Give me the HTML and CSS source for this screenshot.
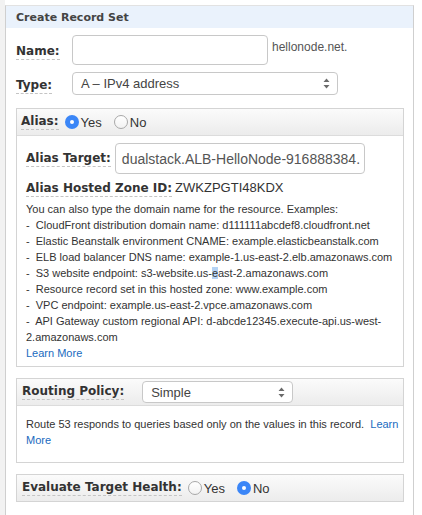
FILE: index.html
```html
<!DOCTYPE html>
<html>
<head>
<meta charset="utf-8">
<link rel="stylesheet" href="styles.css">
</head>
<body>
<div class="page">
  <div class="panel">
    <div class="panel-head">Create Record Set</div>
    <div class="panel-body">
      <div class="row name-row">
        <span class="label-col"><span class="label">Name:</span></span>
        <div class="input name-input"></div>
        <span class="suffix">hellonode.net.</span>
      </div>
      <div class="row type-row">
        <span class="label-col"><span class="label">Type:</span></span>
        <div class="select type-select">
          <span class="select-text">A – IPv4 address</span>
          <svg class="arrows" width="7" height="11" viewBox="0 0 7 11"><path d="M3.5 0.5 L6.5 4 L0.5 4 Z M3.5 10.5 L6.5 7 L0.5 7 Z" fill="#6b6b6b"/></svg>
        </div>
      </div>

      <div class="box alias-box">
        <div class="box-head">
          <span class="label">Alias:</span>
          <span class="radio on"></span><span class="radio-text">Yes</span>
          <span class="radio"></span><span class="radio-text">No</span>
        </div>
        <div class="box-body alias-body">
          <div class="target-row">
            <span class="label">Alias Target:</span>
            <div class="input target-input"><span>dualstack.ALB-HelloNode-916888384.</span></div>
          </div>
          <div class="zone-row"><span class="label">Alias Hosted Zone ID:</span> <span class="zone-val">ZWKZPGTI48KDX</span></div>
          <div class="help">
            <div>You can also type the domain name for the resource. Examples:</div>
            <div>-&nbsp; CloudFront distribution domain name: d111111abcdef8.cloudfront.net</div>
            <div>-&nbsp; Elastic Beanstalk environment CNAME: example.elasticbeanstalk.com</div>
            <div>-&nbsp; ELB load balancer DNS name: example-1.us-east-2.elb.amazonaws.com</div>
            <div>-&nbsp; S3 website endpoint: s3-website.us-<span class="sel">e</span>ast-2.amazonaws.com</div>
            <div>-&nbsp; Resource record set in this hosted zone: www.example.com</div>
            <div>-&nbsp; VPC endpoint: example.us-east-2.vpce.amazonaws.com</div>
            <div>-&nbsp; API Gateway custom regional API: d-abcde12345.execute-api.us-west-2.amazonaws.com</div>
            <div><a class="link">Learn More</a></div>
          </div>
        </div>
      </div>

      <div class="box routing-box">
        <div class="box-head">
          <span class="label">Routing Policy:</span>
          <div class="select routing-select">
            <span class="select-text">Simple</span>
            <svg class="arrows" width="7" height="11" viewBox="0 0 7 11"><path d="M3.5 0.5 L6.5 4 L0.5 4 Z M3.5 10.5 L6.5 7 L0.5 7 Z" fill="#6b6b6b"/></svg>
          </div>
        </div>
        <div class="box-body routing-body">
          <div>Route 53 responds to queries based only on the values in this record.&nbsp; <a class="link">Learn</a></div>
          <div><a class="link">More</a></div>
        </div>
      </div>

      <div class="box eval-box">
        <div class="box-head">
          <span class="label">Evaluate Target Health:</span>
          <span class="radio"></span><span class="radio-text">Yes</span>
          <span class="radio on"></span><span class="radio-text">No</span>
        </div>
      </div>
    </div>
  </div>
</div>
</body>
</html>
```

FILE: styles.css
```css
html, body {
  margin: 0;
  padding: 0;
  background: #fff;
}
.page {
  width: 422px;
  height: 515px;
  overflow: hidden;
  background: linear-gradient(to right, #f2f2f2 5px, #fff 5px);
  padding-top: 5px;
  box-sizing: border-box;
}
.panel {
  margin-left: 5px;
  width: 409px;
  box-sizing: border-box;
  border-left: 1px solid #cfcfcf;
  border-right: 1px solid #cfcfcf;
  border-top: 1px solid #e2e2e2;
  height: 520px;
  background: #fff;
}
.panel-head {
  height: 22px;
  line-height: 23px;
  background: #eaf2fc;
  padding-left: 10px;
  font-family: "DejaVu Sans", Verdana, sans-serif;
  font-weight: bold;
  font-size: 11px;
  color: #444;
}
.panel-body {
  padding: 7px 9px 0 10px;
}
.row {
  display: flex;
  align-items: center;
}
.label-col {
  width: 56px;
  flex: none;
}
.label {
  font-family: "DejaVu Sans", Verdana, sans-serif;
  font-weight: bold;
  font-size: 12px;
  color: #333;
  border-bottom: 1px dashed #c4c4c4;
  padding-bottom: 1px;
  white-space: nowrap;
}
.input {
  box-sizing: border-box;
  border: 1px solid #c8c8c8;
  border-radius: 4px;
  background: #fff;
}
.name-input {
  width: 196px;
  height: 30px;
}
.suffix {
  margin-left: 4px;
  margin-top: -7px;
  font-family: "Liberation Sans", Arial, sans-serif;
  font-size: 12px;
  color: #555;
}
.type-row {
  margin-top: 7px;
}
.select {
  box-sizing: border-box;
  border: 1px solid #c8c8c8;
  border-radius: 4px;
  background: #fff;
  display: flex;
  align-items: center;
  justify-content: space-between;
  font-family: "Liberation Sans", Arial, sans-serif;
  color: #444;
}
.type-select {
  width: 266px;
  height: 23px;
  padding: 0 7px 0 8px;
  font-size: 13px;
}
.arrows {
  display: block;
}
.box {
  box-sizing: border-box;
  width: 388px;
  border: 1px solid #d4d4d4;
}
.box-head {
  box-sizing: border-box;
  height: 27px;
  display: flex;
  align-items: center;
  padding-left: 4px;
  background: linear-gradient(#fbfbfb, #ececec);
  border-bottom: 1px solid #dcdcdc;
}
.alias-box {
  margin-top: 13px;
}
.radio {
  box-sizing: border-box;
  width: 14px;
  height: 14px;
  border-radius: 50%;
  border: 1px solid #a8a8a8;
  background: linear-gradient(#fff, #f2f2f2);
  flex: none;
  position: relative;
}
.radio.on {
  border: none;
  background: #3b86f7;
}
.radio.on::after {
  content: "";
  position: absolute;
  left: 5px;
  top: 5px;
  width: 4px;
  height: 4px;
  border-radius: 50%;
  background: #fff;
}
.radio-text {
  font-family: "Liberation Sans", Arial, sans-serif;
  font-size: 13px;
  color: #333;
  margin-left: 2px;
  margin-right: 12px;
}
.alias-box .box-head .label {
  margin-right: 6px;
}
.box-body {
  font-family: "Liberation Sans", Arial, sans-serif;
  font-size: 11px;
  color: #333;
}
.alias-body {
  padding: 7px 8px 5px 9px;
}
.target-row {
  display: flex;
  align-items: center;
}
.target-row .label {
  margin-right: 4px;
}
.target-input {
  width: 250px;
  height: 31px;
  display: flex;
  align-items: center;
  padding-left: 6px;
  overflow: hidden;
  white-space: nowrap;
  font-size: 14px;
  color: #555;
}
.zone-row {
  margin-top: 3px;
  height: 24px;
  line-height: 22px;
}
.zone-val {
  font-family: "Liberation Sans", Arial, sans-serif;
  font-size: 13px;
  color: #333;
}
.help {
  line-height: 16px;
  margin-top: 0;
}
.sel {
  background: #b5d3f5;
}
.link {
  color: #1a6bc0;
  text-decoration: none;
}
.routing-box {
  margin-top: 11px;
}
.routing-box .box-head {
  padding-left: 5px;
}
.routing-select {
  margin-left: 18px;
  width: 151px;
  height: 22px;
  padding: 0 7px 0 8px;
  font-size: 13px;
}
.routing-body {
  padding: 10px 3px 14px 9px;
  line-height: 16px;
  white-space: nowrap;
}
.eval-box {
  margin-top: 11px;
}
.eval-box .box-head {
  padding-left: 5px;
  border-bottom: none;
  height: 26px;
}
.eval-box .label {
  margin-right: 6px;
}
.eval-box .radio-text {
  margin-right: 12px;
}
```
